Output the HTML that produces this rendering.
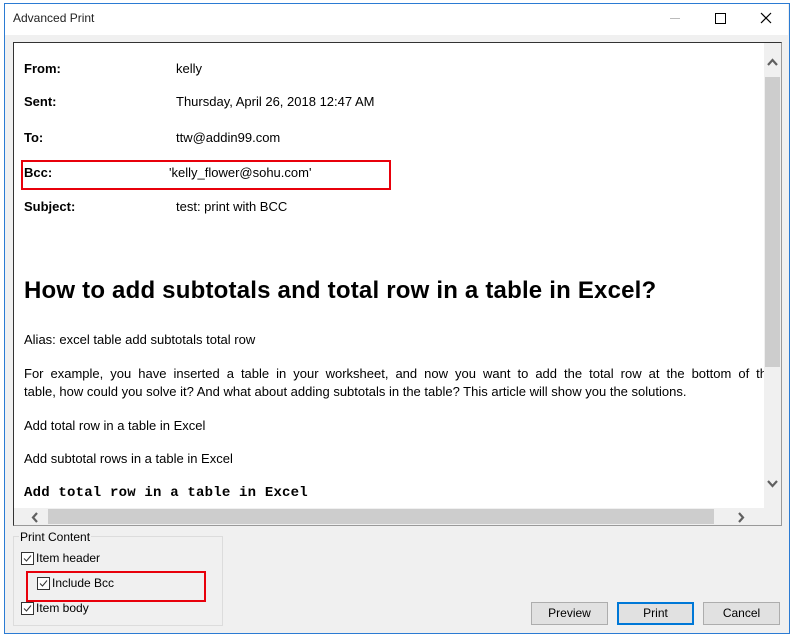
<!DOCTYPE html>
<html><head><style>
body{margin:0;width:797px;height:640px;background:#fff;font-family:"Liberation Sans",sans-serif;position:relative;overflow:hidden}
.win{position:absolute;left:4px;top:3px;width:784px;height:629px;border:1px solid #2b7bd3;background:#f0f0f0}
.abs{position:absolute;white-space:nowrap}
.t{font-size:13px;color:#000}
.panel{position:absolute;left:13px;top:42px;width:767px;height:482px;background:#fff;border:1px solid #333;border-right-color:#999;border-bottom-color:#999;overflow:hidden}
.btn{position:absolute;top:602px;width:75px;height:21px;border:1px solid #adadad;background:#e1e1e1;font-size:12px;text-align:center;line-height:21px}
.cb{position:absolute;width:11px;height:11px;border:1px solid #333;background:#fff}
</style></head><body>
<div class="win"></div>
<div class="abs" style="left:5px;top:4px;width:783px;height:31px;background:#fff"></div>
<div class="abs t" style="left:13px;top:11px;font-size:12px;color:#222">Advanced Print</div>
<div class="abs" style="left:670px;top:18px;width:10px;height:1px;background:#bbb"></div>
<div class="abs" style="left:715px;top:13px;width:9px;height:9px;border:1px solid #000"></div>
<svg class="abs" style="left:760px;top:12px" width="12" height="12"><path d="M1 1L11 11M11 1L1 11" stroke="#000" stroke-width="1.2"/></svg>
<div class="panel">
 <div class="abs t" style="left:10px;top:18px;font-weight:bold">From:</div>
 <div class="abs t" style="left:162px;top:18px">kelly</div>
 <div class="abs t" style="left:10px;top:51px;font-weight:bold">Sent:</div>
 <div class="abs t" style="left:162px;top:51px">Thursday, April 26, 2018 12:47 AM</div>
 <div class="abs t" style="left:10px;top:87px;font-weight:bold">To:</div>
 <div class="abs t" style="left:162px;top:87px">ttw@addin99.com</div>
 <div class="abs t" style="left:10px;top:122px;font-weight:bold">Bcc:</div>
 <div class="abs t" style="left:155px;top:122px">'kelly_flower@sohu.com'</div>
 <div class="abs" style="left:7px;top:117px;width:366px;height:26px;border:2px solid #e8000b"></div>
 <div class="abs t" style="left:10px;top:156px;font-weight:bold">Subject:</div>
 <div class="abs t" style="left:162px;top:156px">test: print with BCC</div>
 <div class="abs" style="left:10px;top:234px;font-size:24px;font-weight:bold;letter-spacing:0.2px">How to add subtotals and total row in a table in Excel?</div>
 <div class="abs t" style="left:10px;top:289px">Alias: excel table add subtotals total row</div>
 <div class="abs t" style="left:10px;top:323px;word-spacing:3.4px">For example, you have inserted a table in your worksheet, and now you want to add the total row at the bottom of the</div>
 <div class="abs t" style="left:10px;top:341px">table, how could you solve it? And what about adding subtotals in the table? This article will show you the solutions.</div>
 <div class="abs t" style="left:10px;top:375px">Add total row in a table in Excel</div>
 <div class="abs t" style="left:10px;top:408px">Add subtotal rows in a table in Excel</div>
 <div class="abs" style="left:10px;top:442px;font-family:'Liberation Mono',monospace;font-weight:bold;font-size:14px;letter-spacing:0.2px">Add total row in a table in Excel</div>
 <div class="abs" style="left:750px;top:0;width:17px;height:465px;background:#f0f0f0"></div>
 <div class="abs" style="left:751px;top:34px;width:15px;height:290px;background:#cdcdcd"></div>
 <svg class="abs" style="left:752px;top:14px" width="13" height="10"><path d="M2 8L6.5 3L11 8" stroke="#606060" stroke-width="2.2" fill="none"/></svg>
 <svg class="abs" style="left:752px;top:436px" width="13" height="10"><path d="M2 2L6.5 7L11 2" stroke="#606060" stroke-width="2.2" fill="none"/></svg>
 <div class="abs" style="left:0;top:465px;width:767px;height:17px;background:#f0f0f0"></div>
 <div class="abs" style="left:34px;top:466px;width:666px;height:15px;background:#cdcdcd"></div>
 <svg class="abs" style="left:16px;top:468px" width="10" height="13"><path d="M7 2L3 6.5L7 11" stroke="#606060" stroke-width="2.2" fill="none"/></svg>
 <svg class="abs" style="left:722px;top:468px" width="10" height="13"><path d="M3 2L7 6.5L3 11" stroke="#606060" stroke-width="2.2" fill="none"/></svg>
</div>
<div class="abs" style="left:13px;top:536px;width:208px;height:88px;border:1px solid #dcdcdc"></div>
<div class="abs" style="left:19px;top:530px;font-size:12px;background:#f0f0f0;padding:0 1px">Print Content</div>
<div class="cb" style="left:21px;top:552px"></div><svg class="abs" style="left:21px;top:552px" width="13" height="13"><path d="M3 6.5L5.5 9L10 3.5" stroke="#333" fill="none"/></svg>
<div class="abs" style="left:36px;top:551px;font-size:12px">Item header</div>
<div class="cb" style="left:37px;top:577px"></div><svg class="abs" style="left:37px;top:577px" width="13" height="13"><path d="M3 6.5L5.5 9L10 3.5" stroke="#333" fill="none"/></svg>
<div class="abs" style="left:52px;top:576px;font-size:12px">Include Bcc</div>
<div class="abs" style="left:26px;top:571px;width:176px;height:27px;border:2px solid #e8000b"></div>
<div class="cb" style="left:21px;top:602px"></div><svg class="abs" style="left:21px;top:602px" width="13" height="13"><path d="M3 6.5L5.5 9L10 3.5" stroke="#333" fill="none"/></svg>
<div class="abs" style="left:36px;top:601px;font-size:12px">Item body</div>
<div class="btn" style="left:531px">Preview</div>
<div class="btn" style="left:617px;border:2px solid #0078d7;width:73px;height:19px;line-height:19px">Print</div>
<div class="btn" style="left:703px">Cancel</div>
</body></html>
